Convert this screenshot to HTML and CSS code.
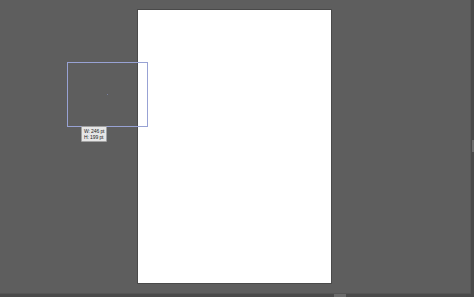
FILE: index.html
```html
<!DOCTYPE html>
<html lang="en">
  <head>
    <meta charset="UTF-8" />
    <title>Artboard</title>
    <link rel="stylesheet" href="styles.css">
  </head>
  <body>
    <div class="workspace">
      <div class="canvas">
        <div class="artboard"></div>

        <div class="marquee">
          <span class="marquee-center"></span>
        </div>
        <div class="size-tip">
          <div>W: 246 pt</div>
          <div>H: 199 pt</div>
        </div>
      </div>
      <div class="scroll-v"><span class="thumb-v"></span></div>
      <div class="scroll-h"><span class="thumb-h"></span></div>
      <div class="scroll-corner"></div>
    </div>
  </body>
</html>
```

FILE: styles.css
```css
html,
body {
  margin: 0;
  height: 100%;
}

body {
  font-family: "Liberation Sans", Arial, sans-serif;
  background: #5d5d5d;
  overflow: hidden;
}

.workspace {
  display: grid;
  grid-template-columns: 1fr 3px;
  grid-template-rows: 1fr 3px;
  width: 474px;
  height: 297px;
}

.canvas {
  position: relative;
  background: #5e5e5e;
  border-bottom: 1px solid #555;
  border-right: 1px solid #575757;
}

.artboard {
  position: absolute;
  left: 138px;
  top: 10px;
  width: 193px;
  height: 273px;
  background: #fff;
  box-shadow: 0 0 0 1px #4a4a4a;
}

.marquee {
  position: absolute;
  left: 67px;
  top: 62px;
  width: 81px;
  height: 65px;
  border: 1px solid #98a2d4;
  box-sizing: border-box;
}

.marquee-center {
  position: absolute;
  left: 39px;
  top: 31px;
  width: 1px;
  height: 1px;
  background: #7a80a0;
}

.size-tip {
  position: absolute;
  left: 81px;
  top: 126px;
  padding: 1px 2px;
  background: #e6e6e6;
  border: 1px solid #a0a0a0;
  border-radius: 1px;
  color: #222;
  font-size: 5px;
  line-height: 6px;
  letter-spacing: -0.1px;
  white-space: nowrap;
}

.scroll-v {
  background: #4a4a4a;
  position: relative;
}

.thumb-v {
  position: absolute;
  left: 1px;
  top: 140px;
  width: 2px;
  height: 12px;
  background: #6e6e6e;
}

.scroll-h {
  background: #4a4a4a;
  position: relative;
}

.thumb-h {
  position: absolute;
  left: 334px;
  top: 0;
  width: 12px;
  height: 3px;
  background: #6a6a6a;
}

.scroll-corner {
  background: #4a4a4a;
}
```
